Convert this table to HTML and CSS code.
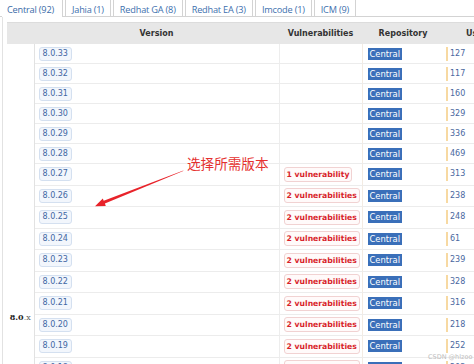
FILE: index.html
```html
<!DOCTYPE html>
<html lang="en">
<head>
<meta charset="utf-8">
<title>Versions</title>
<link rel="stylesheet" href="styles.css">
</head>
<body>
<div class="tabs">
  <div class="tab active">Central (92)</div>
  <div class="tab">Jahia (1)</div>
  <div class="tab">Redhat GA (8)</div>
  <div class="tab">Redhat EA (3)</div>
  <div class="tab">Imcode (1)</div>
  <div class="tab">ICM (9)</div>
</div>
<div class="panel">
  <table class="grid">
    <colgroup>
      <col class="c-group"><col class="c-ver"><col class="c-vul"><col class="c-repo"><col class="c-use">
    </colgroup>
    <thead>
      <tr><th></th><th>Version</th><th>Vulnerabilities</th><th>Repository</th><th class="h-use"><span class="uh">Usages</span></th></tr>
    </thead>
    <tbody>
      <tr class="r"><td class="group" rowspan="17"><b>8.0</b><span class="gx">.x</span></td><td class="ver"><span class="vb">8.0.33</span></td><td class="vul"></td><td class="repo"><span class="cb">Central</span></td><td class="use"><span class="ub">127</span></td></tr>
      <tr class="r"><td class="ver"><span class="vb">8.0.32</span></td><td class="vul"></td><td class="repo"><span class="cb">Central</span></td><td class="use"><span class="ub">117</span></td></tr>
      <tr class="r"><td class="ver"><span class="vb">8.0.31</span></td><td class="vul"></td><td class="repo"><span class="cb">Central</span></td><td class="use"><span class="ub">160</span></td></tr>
      <tr class="r"><td class="ver"><span class="vb">8.0.30</span></td><td class="vul"></td><td class="repo"><span class="cb">Central</span></td><td class="use"><span class="ub">329</span></td></tr>
      <tr class="r"><td class="ver"><span class="vb">8.0.29</span></td><td class="vul"></td><td class="repo"><span class="cb">Central</span></td><td class="use"><span class="ub">336</span></td></tr>
      <tr class="r"><td class="ver"><span class="vb">8.0.28</span></td><td class="vul"></td><td class="repo"><span class="cb">Central</span></td><td class="use"><span class="ub">469</span></td></tr>
      <tr class="rv"><td class="ver"><span class="vb">8.0.27</span></td><td class="vul"><span class="xb">1 vulnerability</span></td><td class="repo"><span class="cb">Central</span></td><td class="use"><span class="ub">313</span></td></tr>
      <tr class="rv"><td class="ver"><span class="vb">8.0.26</span></td><td class="vul"><span class="xb">2 vulnerabilities</span></td><td class="repo"><span class="cb">Central</span></td><td class="use"><span class="ub">238</span></td></tr>
      <tr class="rv"><td class="ver"><span class="vb">8.0.25</span></td><td class="vul"><span class="xb">2 vulnerabilities</span></td><td class="repo"><span class="cb">Central</span></td><td class="use"><span class="ub">248</span></td></tr>
      <tr class="rv"><td class="ver"><span class="vb">8.0.24</span></td><td class="vul"><span class="xb">2 vulnerabilities</span></td><td class="repo"><span class="cb">Central</span></td><td class="use"><span class="ub">61</span></td></tr>
      <tr class="rv"><td class="ver"><span class="vb">8.0.23</span></td><td class="vul"><span class="xb">2 vulnerabilities</span></td><td class="repo"><span class="cb">Central</span></td><td class="use"><span class="ub">239</span></td></tr>
      <tr class="rv"><td class="ver"><span class="vb">8.0.22</span></td><td class="vul"><span class="xb">2 vulnerabilities</span></td><td class="repo"><span class="cb">Central</span></td><td class="use"><span class="ub">328</span></td></tr>
      <tr class="rv"><td class="ver"><span class="vb">8.0.21</span></td><td class="vul"><span class="xb">2 vulnerabilities</span></td><td class="repo"><span class="cb">Central</span></td><td class="use"><span class="ub">316</span></td></tr>
      <tr class="rv"><td class="ver"><span class="vb">8.0.20</span></td><td class="vul"><span class="xb">2 vulnerabilities</span></td><td class="repo"><span class="cb">Central</span></td><td class="use"><span class="ub">218</span></td></tr>
      <tr class="rv"><td class="ver"><span class="vb">8.0.19</span></td><td class="vul"><span class="xb">2 vulnerabilities</span></td><td class="repo"><span class="cb">Central</span></td><td class="use"><span class="ub">252</span></td></tr>
      <tr class="rv"><td class="ver"><span class="vb">8.0.18</span></td><td class="vul"><span class="xb">2 vulnerabilities</span></td><td class="repo"><span class="cb">Central</span></td><td class="use"><span class="ub">203</span></td></tr>
      <tr class="rv"><td class="ver"><span class="vb">8.0.17</span></td><td class="vul"><span class="xb">2 vulnerabilities</span></td><td class="repo"><span class="cb">Central</span></td><td class="use"><span class="ub">187</span></td></tr>
    </tbody>
  </table>
</div>
<div class="note">选择所需版本</div>
<svg class="arrow" width="474" height="364" viewBox="0 0 474 364" aria-hidden="true">
  <polygon fill="#e8232a" points="183.4,170.4 183.2,171.0 104.9,203.6 105.8,205.9 95,206.2 102.8,198.5 103.7,200.8"/>
</svg>
<div class="mark">CSDN @hlzoo</div>
</body>
</html>
```

FILE: styles.css
```css
html, body {
  margin: 0;
  padding: 0;
  background: #fff;
  overflow: hidden;
  width: 474px;
  height: 364px;
}
body {
  font-family: "DejaVu Sans", Verdana, sans-serif;
  position: relative;
}
.tabs {
  display: flex;
  height: 16px;
  padding-left: 2px;
  border-bottom: 1px solid #d3d3d3;
  font-family: "Open Sans", "Noto Sans", sans-serif;
  font-size: 9.2px;
  letter-spacing: -0.2px;
}
.tab {
  box-sizing: border-box;
  height: 16px;
  margin-right: 2px;
  padding: 3px 6px 0 6px;
  line-height: 13px;
  color: #3d6fae;
  border: 1px solid #d3d3d3;
  border-top: none;
  border-bottom: none;
  background: #fff;
  white-space: nowrap;
}
.tab.active {
  height: 17px;
  margin-bottom: -1px;
  padding-left: 5px;
  padding-right: 8px;
  border-left: none;
  color: #3a6ba8;
}
.panel {
  border-left: 1px solid #e2e2e2;
  margin-left: 2px;
  padding: 5px 0 0 4px;
}
.grid {
  border-collapse: collapse;
  table-layout: fixed;
  width: 507px;
  font-size: 8px;
}
.c-group { width: 27px; }
.c-ver { width: 245px; }
.c-vul { width: 83px; }
.c-repo { width: 82px; }
.c-use { width: 70px; }
.grid th {
  height: 21px;
  padding: 0;
  background: #e7e7e7;
  border-top: 1px solid #dcdcdc;
  font-weight: bold;
  font-size: 8px;
  color: #333;
  text-align: center;
  white-space: nowrap;
}
.grid th.h-use {
  text-align: left;
}
.uh {
  display: inline-block;
  margin-left: 22px;
}
.grid td {
  padding: 0;
  border-bottom: 1px solid #ececec;
  vertical-align: middle;
}
.r td { height: 19px; }
.rv td { height: 20.5px; }
.grid td.group {
  border-bottom: none;
  border-right: 1px solid #e2e2e2;
  vertical-align: top;
  text-align: center;
  padding-top: 268px;
  font-family: "DejaVu Serif", serif;
  font-size: 8px;
  color: #222;
}
.gx { color: #666; font-weight: normal; }
.ver {
  padding-left: 4px !important;
  border-right: 1px solid #ededed;
}
.vb {
  display: inline-block;
  height: 12px;
  line-height: 12px;
  padding: 0 3px;
  background: #f2f6fc;
  border: 1px solid #d4e0f0;
  border-radius: 3px;
  color: #3f66a3;
  font-size: 8px;
}
.vul {
  padding-left: 4px !important;
  border-right: 1px solid #f3ebe2;
}
.xb {
  display: inline-block;
  height: 13px;
  line-height: 13px;
  padding: 0 2px;
  background: #fffafa;
  border: 1px solid #f1d2d2;
  border-radius: 3px;
  color: #d81f2b;
  font-weight: bold;
  font-size: 7.7px;
  white-space: nowrap;
}
.repo {
  padding-left: 5px !important;
}
.cb {
  display: inline-block;
  height: 12px;
  line-height: 12px;
  padding: 0 2px;
  background: #3a6fb9;
  color: #fff;
  font-size: 8.4px;
}
.use {
  padding-left: 2px !important;
}
.ub {
  display: inline-block;
  height: 14px;
  line-height: 14px;
  padding-left: 2px;
  border-left: 2px solid #f7d9a2;
  color: #4a68a0;
  font-size: 8px;
}
.note {
  position: absolute;
  left: 187px;
  top: 154px;
  font-family: "Noto Sans CJK SC", sans-serif;
  font-size: 13.6px;
  line-height: 18px;
  color: #e5312f;
}
.arrow {
  position: absolute;
  left: 0;
  top: 0;
}
.mark {
  position: absolute;
  left: 428px;
  top: 353px;
  font-family: "DejaVu Sans", sans-serif;
  font-size: 6.5px;
  color: #bdbdbd;
  white-space: nowrap;
}
```
